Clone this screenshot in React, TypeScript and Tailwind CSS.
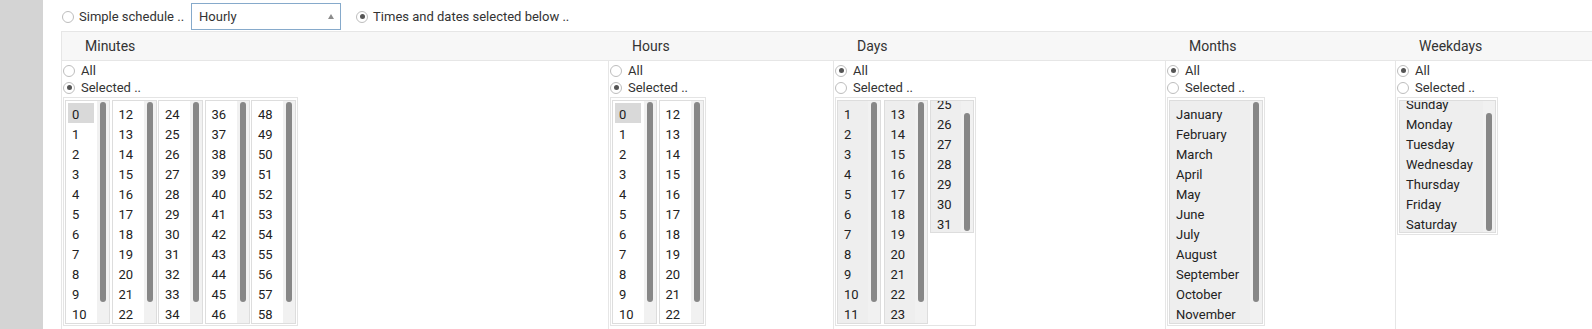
import clsx from "clsx";

const range = (from: number, count: number) =>
  Array.from({ length: count }, (_, i) => String(from + i));

const months = [
  "January", "February", "March", "April", "May", "June",
  "July", "August", "September", "October", "November", "December",
];
const weekdays = ["Sunday", "Monday", "Tuesday", "Wednesday", "Thursday", "Friday", "Saturday"];

function Radio({ checked }: { checked?: boolean }) {
  return (
    <span className="w-[12px] h-[12px] rounded-full border border-[#bdbdbd] bg-white flex items-center justify-center shrink-0">
      {checked && <span className="w-[5px] h-[5px] rounded-full bg-[#555555]" />}
    </span>
  );
}

function RadioRow({ checked, label }: { checked?: boolean; label: string }) {
  return (
    <label className="flex items-center gap-[6px] h-[17px] text-[13px] text-[#333333] whitespace-nowrap">
      <Radio checked={checked} />
      {label}
    </label>
  );
}

type ListProps = {
  items: string[];
  className: string;
  short?: boolean;
  disabled?: boolean;
  selected?: string;
};

// a <select multiple> look-alike: 11 visible rows, or a short one scrolled to its end
function ListBox({ items, className, short, disabled, selected }: ListProps) {
  const visible = short ? items : items.slice(0, 11);
  return (
    <div
      className={clsx(
        "flex shrink-0 border border-[#dddddd] overflow-hidden",
        short ? "h-[133px]" : "h-[224px]",
        disabled ? "bg-[#eeeeee]" : "bg-white",
        className
      )}
    >
      <div className={clsx("flex-1 min-w-0 pl-[2px] pr-[3px]", short ? "-mt-[8px]" : "pt-[2px]")}>
        {visible.map((it) => (
          <div
            key={it}
            className={clsx(
              "h-[20px] pt-[3px] leading-[17px] pl-[4px] text-[13px] text-[#222222] whitespace-nowrap",
              it === selected && "bg-[#d9d9d9]"
            )}
          >
            {it}
          </div>
        ))}
      </div>
      {/* scrollbar */}
      <div className="w-[12px] shrink-0 bg-[#f1f1f1]">
        <div
          className={clsx(
            "mx-auto w-[6px] rounded-full bg-[#878787]",
            short ? "mt-[12px] h-[118px]" : "mt-[1px] h-[200px]"
          )}
        />
      </div>
    </div>
  );
}

function Cell({ all, children, gap }: { all?: boolean; children: React.ReactNode; gap: string }) {
  return (
    <div className="border-l border-[#e6e6e6] pl-[1px] pt-[1px] min-w-0">
      <RadioRow checked={all} label="All" />
      <RadioRow checked={!all} label="Selected .." />
      <div className={clsx("mt-[1px] flex w-fit items-start border border-[#e4e4e4] pt-[2px] px-[1px] pb-[1px]", gap)}>
        {children}
      </div>
    </div>
  );
}

export default function App() {
  const headers = ["Minutes", "Hours", "Days", "Months", "Weekdays"];

  return (
    <div className="flex h-[329px] overflow-hidden bg-white font-['Roboto',sans-serif]">
      <div className="w-[43px] shrink-0 bg-[#d4d4d4]" />

      <div className="flex-1 min-w-0 pl-[18px]">
        {/* Schedule mode */}
        <div className="h-[31px] pt-[3px] pl-[1px] flex items-start text-[13px] text-[#333333]">
          <div className="h-[27px] flex items-center gap-[5px]">
            <Radio />
            <span>Simple schedule ..</span>
          </div>
          <div className="ml-[7px] w-[150px] h-[27px] border border-[#86aacb] bg-white flex items-center justify-between pl-[7px] pr-[6px]">
            <span>Hourly</span>
            <svg width="6" height="5" viewBox="0 0 6 5">
              <polygon points="3,0 6,5 0,5" fill="#8c8c8c" />
            </svg>
          </div>
          <div className="ml-[15px] h-[27px] flex items-center gap-[5px]">
            <Radio checked />
            <span>Times and dates selected below ..</span>
          </div>
        </div>

        {/* Header */}
        <div className="grid grid-cols-[547px_225px_332px_230px_1fr] h-[30px] bg-[#f7f7f7] border-y border-l border-[#e6e6e6]">
          {headers.map((h) => (
            <div key={h} className="pl-[23px] flex items-center text-[14px] text-[#333333]">
              {h}
            </div>
          ))}
        </div>

        {/* Body */}
        <div className="grid grid-cols-[547px_225px_332px_230px_1fr] h-[270px]">
          <Cell gap="gap-[1.5px]">
            {[0, 12, 24, 36, 48].map((s) => (
              <ListBox key={s} items={range(s, 12)} className="w-[45px]" selected="0" />
            ))}
          </Cell>

          <Cell gap="gap-[1.5px]">
            {[0, 12].map((s) => (
              <ListBox key={s} items={range(s, 12)} className="w-[45px]" selected="0" />
            ))}
          </Cell>

          <Cell all gap="gap-[2.5px]">
            <ListBox items={range(1, 12)} className="w-[44px]" disabled />
            <ListBox items={range(13, 12)} className="w-[44px]" disabled />
            <ListBox items={range(25, 7)} className="w-[44px]" disabled short />
          </Cell>

          <Cell all gap="gap-0">
            <ListBox items={months} className="w-[94px]" disabled />
          </Cell>

          <Cell all gap="gap-0">
            <ListBox items={weekdays} className="w-[97px]" disabled short />
          </Cell>
        </div>
      </div>
    </div>
  );
}
